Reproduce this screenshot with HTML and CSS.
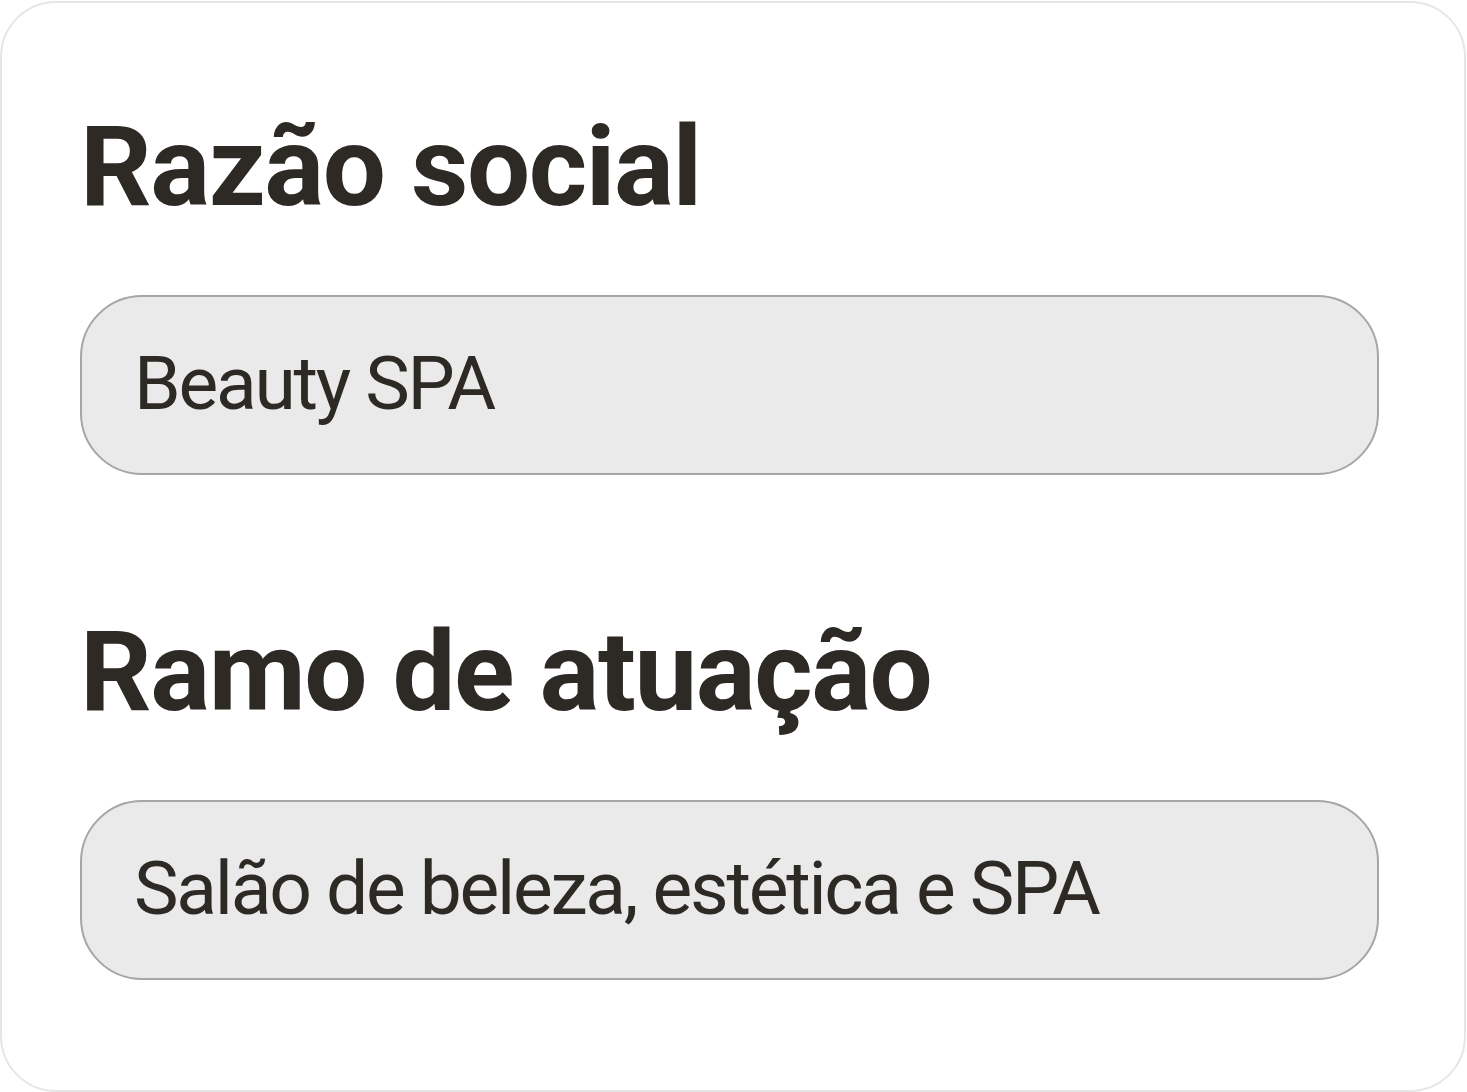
FILE: index.html
```html
<!DOCTYPE html>
<html lang="pt-BR">
<head>
<meta charset="utf-8">
<title>Dados da empresa</title>
<link rel="stylesheet" href="styles.css">
</head>
<body>
<div class="card">
  <div class="field">
    <h2 class="label">Razão social</h2>
    <div class="box">Beauty SPA</div>
  </div>
  <div class="field">
    <h2 class="label">Ramo de atuação</h2>
    <div class="box">Salão de beleza, estética e SPA</div>
  </div>
</div>
</body>
</html>
```

FILE: styles.css
```css
html, body {
  margin: 0;
  padding: 0;
  background: #ffffff;
}

body {
  font-family: Roboto, "Liberation Sans", sans-serif;
  color: #2d2a26;
}

.card {
  box-sizing: border-box;
  width: 1466px;
  height: 1091px;
  margin-top: 1px;
  border: 2px solid #e6e6e6;
  border-radius: 56px;
  background: #ffffff;
  padding: 98px 85px 0 78px;
  display: flex;
  flex-direction: column;
  gap: 131px;
}

.field {
  display: flex;
  flex-direction: column;
  gap: 63px;
}

.label {
  margin: 0;
  font-size: 112px;
  font-weight: 700;
  line-height: 131px;
  letter-spacing: -1.45px;
}

.box {
  box-sizing: border-box;
  height: 180px;
  border: 2px solid #a6a6a6;
  border-radius: 62px;
  background: #eaeaea;
  padding: 0 52px 4px;
  display: flex;
  align-items: center;
  font-size: 75px;
  font-weight: 400;
  line-height: 88px;
  letter-spacing: -2.3px;
}
```
